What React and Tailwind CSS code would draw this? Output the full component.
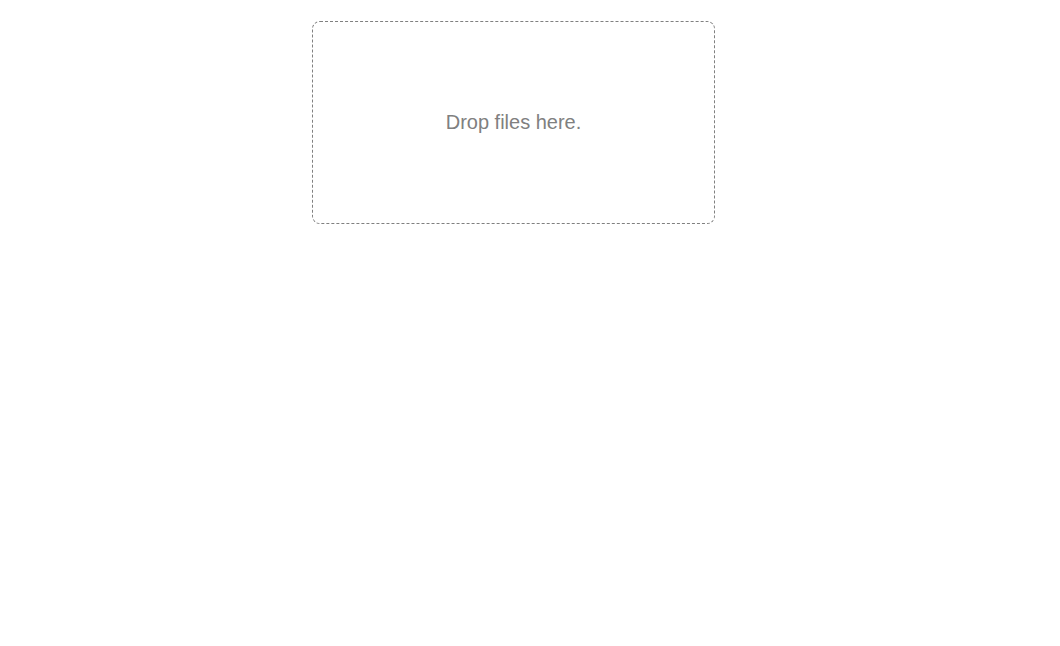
import { useState } from "react";

const DropZone = () => {
  const [files, setFiles] = useState([]);

  const handleDrop = (e) => {
    e.preventDefault();
    setFiles(Array.from(e.dataTransfer.files));
  };

  return (
    <div
      onDragOver={(e) => e.preventDefault()}
      onDrop={handleDrop}
      className="flex h-[203px] w-full max-w-[403px] items-center justify-center rounded-lg border border-dashed border-[#808080] pb-0.5"
    >
      <p className="text-xl text-[#808080]">
        {files.length > 0
          ? files.map((file) => file.name).join(", ")
          : "Drop files here."}
      </p>
    </div>
  );
};

const App = () => {
  return (
    <main className="flex min-h-screen items-start justify-center bg-white pt-[21px] pr-[33px] font-['Liberation_Sans',Arial,sans-serif]">
      <DropZone />
    </main>
  );
};

export default App;
